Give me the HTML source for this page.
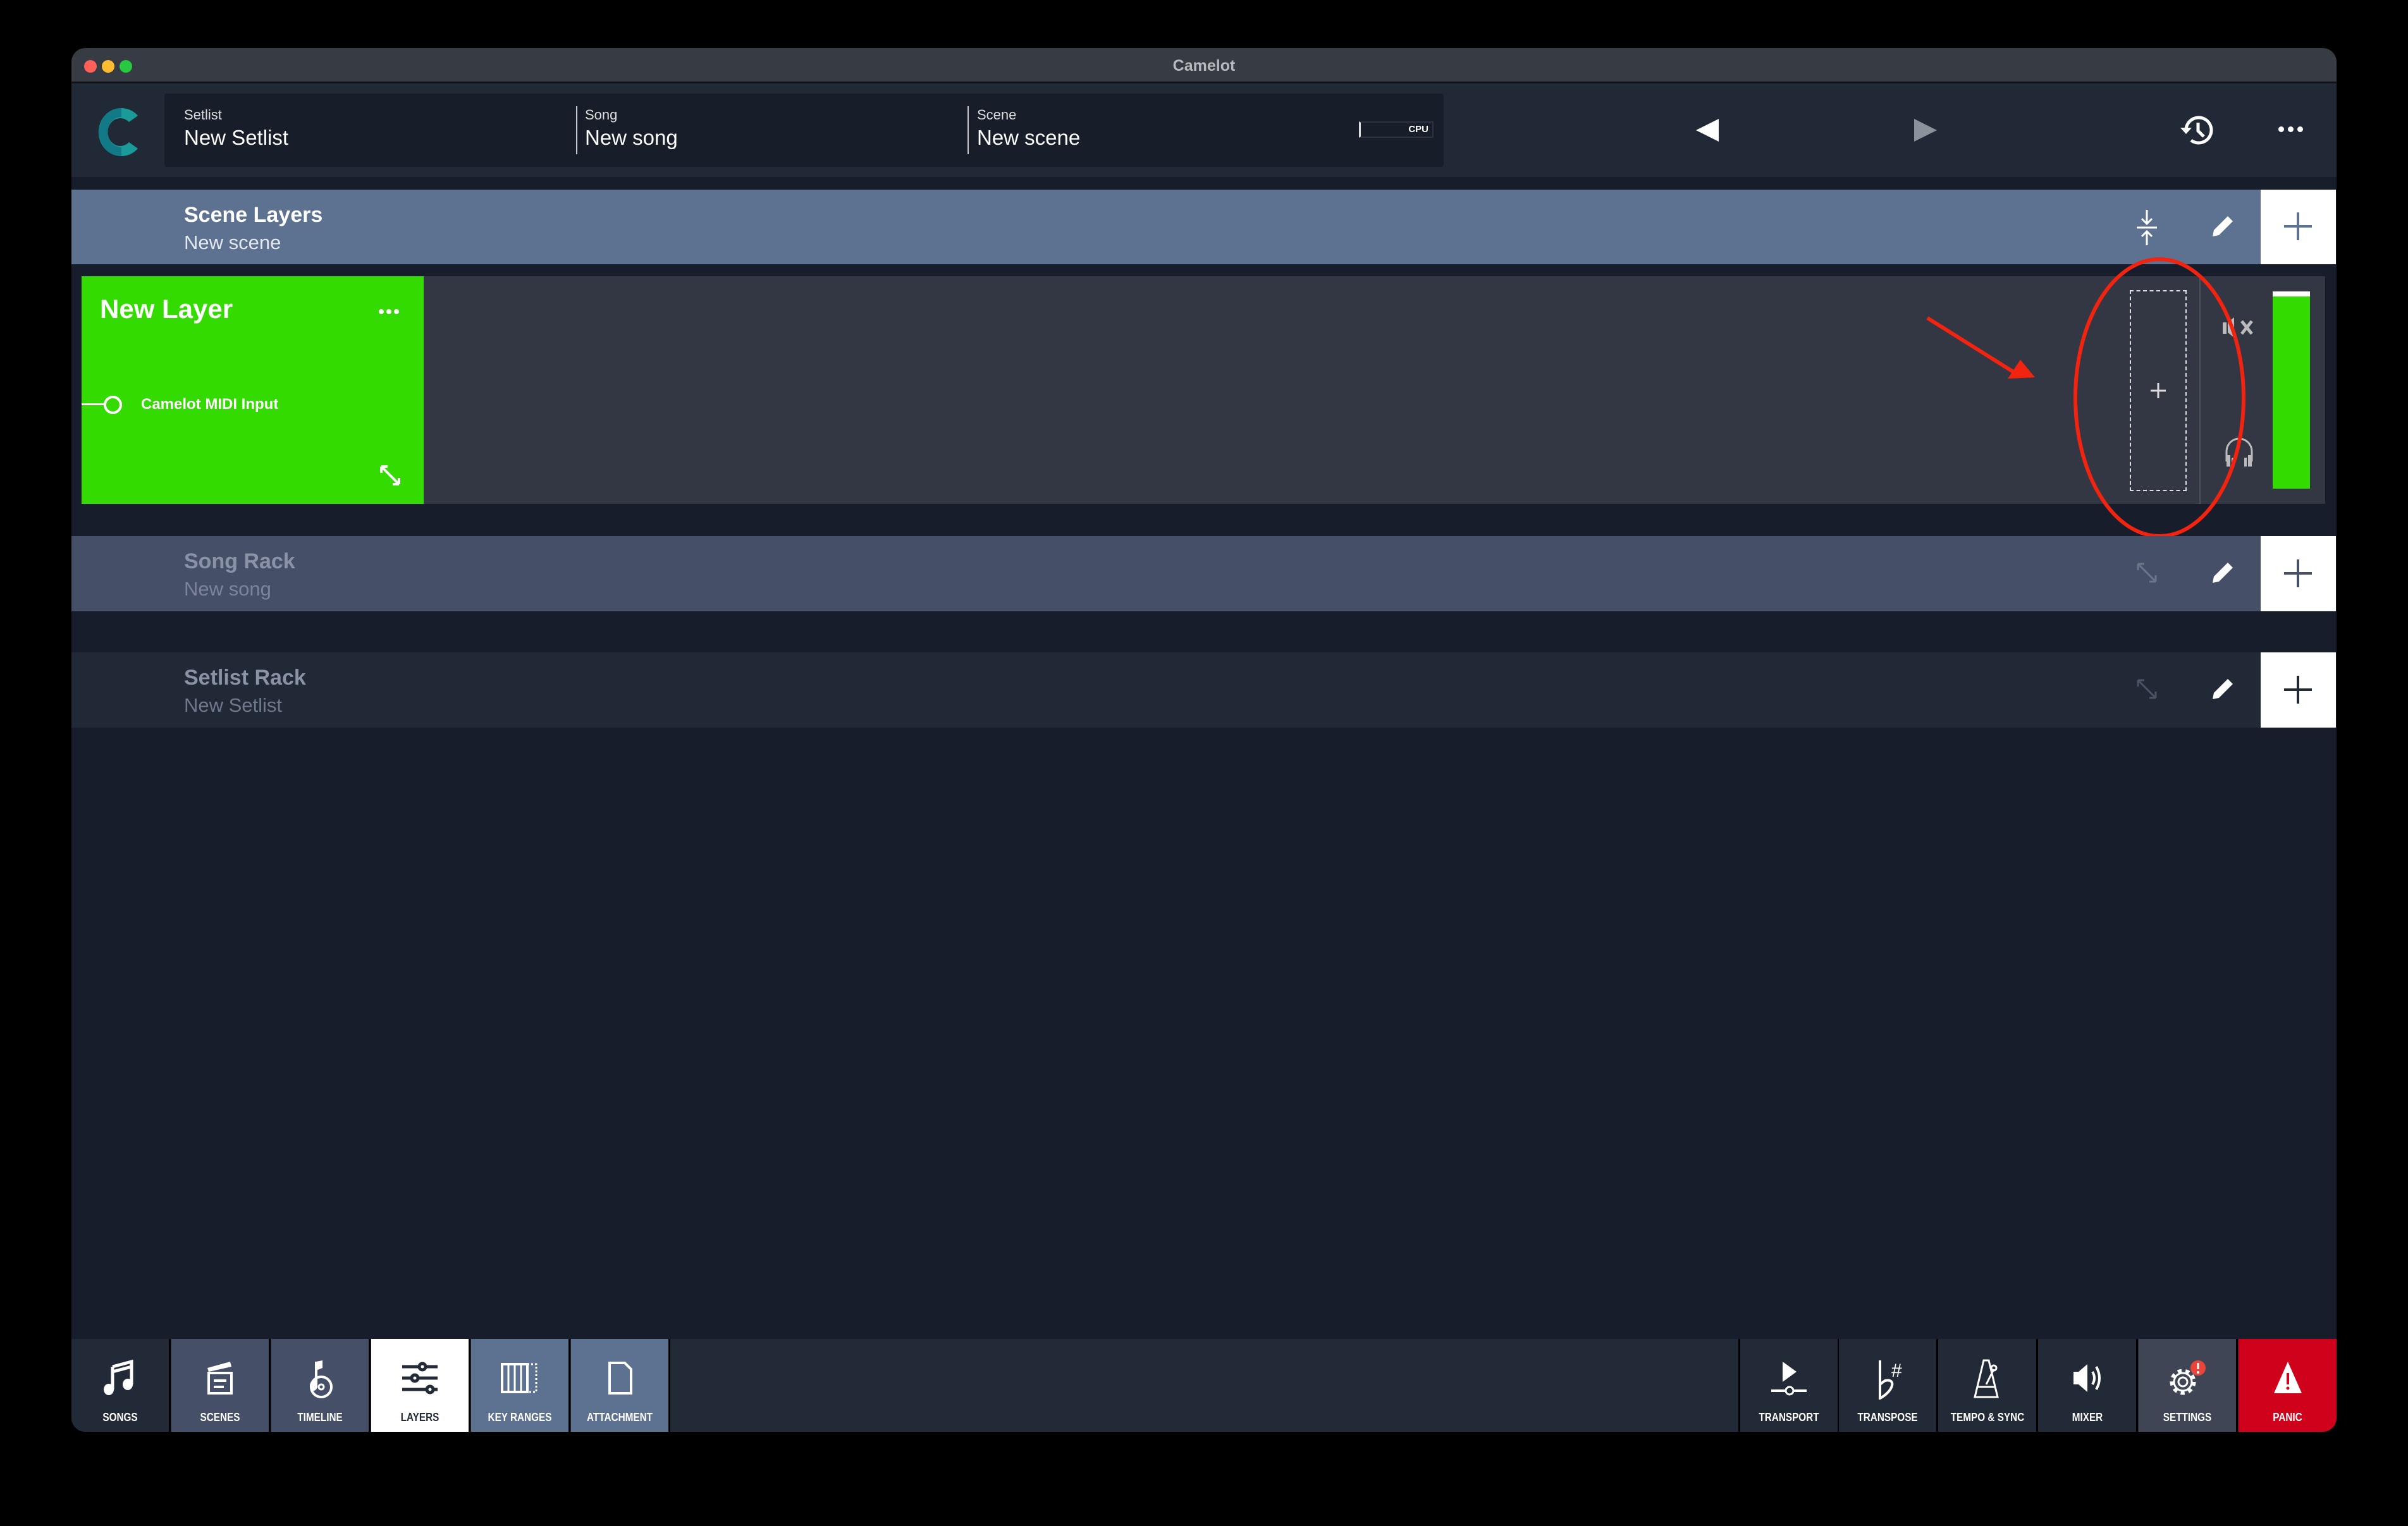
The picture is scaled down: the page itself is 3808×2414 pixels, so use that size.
<!DOCTYPE html>
<html><head><meta charset="utf-8"><style>
*{margin:0;padding:0;box-sizing:border-box}
body{width:3808px;height:2414px;background:#000;position:relative;overflow:hidden;font-family:"Liberation Sans",sans-serif;color:#fff}
.a{position:absolute}
.win{left:113px;top:76px;width:3582px;height:2189px;background:#171d2a;border-radius:22px;overflow:hidden}
.t{white-space:nowrap}
.tab{position:absolute;top:2042px;height:147px;width:157px;border-right:3px solid #000}
.tab .l{position:absolute;bottom:12px;width:100%;text-align:center;font-size:18px;font-weight:bold;transform:scaleX(.85)}
.tab svg{position:absolute;left:50%;top:32px;transform:translateX(-50%)}
.plus{position:absolute;background:#fff;width:119px;height:118px}
</style></head><body>
<div class="a win">
 <div class="a" style="left:0;top:0;width:100%;height:55px;background:#373b44;border-bottom:2px solid #111"></div>
 <div class="a" style="left:20px;top:19px;width:20px;height:20px;border-radius:50%;background:#fe5f57"></div>
 <div class="a" style="left:48px;top:19px;width:20px;height:20px;border-radius:50%;background:#febc2e"></div>
 <div class="a" style="left:76px;top:19px;width:20px;height:20px;border-radius:50%;background:#28c840"></div>
 <div class="a t" style="left:0;width:100%;top:14px;text-align:center;font-size:25px;font-weight:bold;color:#b7b9bd">Camelot</div>
 <div class="a" style="left:0;top:56px;width:100%;height:148px;background:#212836"></div>
 <svg class="a" style="left:35px;top:87px" width="76" height="92" viewBox="0 0 76 92"><path d="M70 20 A36 38 0 1 0 70 72 L56 62 A20 22 0 1 1 56 30 Z" fill="#1b9a9a"/><path d="M44 8 A36 38 0 0 0 44 84 L44 70 A20 22 0 0 1 44 22Z" fill="#117a86"/></svg>
 <div class="a" style="left:147px;top:72px;width:2023px;height:116px;background:#171d29;border-radius:4px"></div>
 <div class="a" style="left:798px;top:92px;width:2px;height:76px;background:#c8c8c8"></div>
 <div class="a" style="left:1417px;top:92px;width:2px;height:76px;background:#c8c8c8"></div>
 <div class="a t" style="left:178px;top:93px;font-size:22px;color:#ddd">Setlist</div>
 <div class="a t" style="left:178px;top:123px;font-size:33px">New Setlist</div>
 <div class="a t" style="left:812px;top:93px;font-size:22px;color:#ddd">Song</div>
 <div class="a t" style="left:812px;top:123px;font-size:33px">New song</div>
 <div class="a t" style="left:1432px;top:93px;font-size:22px;color:#ddd">Scene</div>
 <div class="a t" style="left:1432px;top:123px;font-size:33px">New scene</div>
 <div class="a" style="left:2036px;top:116px;width:118px;height:26px;border:2px solid #2c3242;border-left:3px solid #ddd;font-size:15px;font-weight:bold;text-align:right;padding-right:6px;line-height:22px">CPU</div>
 <svg class="a" style="left:2565px;top:108px" width="44" height="44"><path d="M40 4 V40 L4 22Z" fill="#fff"/></svg>
 <svg class="a" style="left:2910px;top:108px" width="44" height="44"><path d="M4 4 V40 L40 22Z" fill="#8c929c"/></svg>
 <svg class="a" style="left:3332px;top:100px" width="60" height="60" viewBox="0 0 60 60"><path d="M12 30 A20 20 0 1 1 20 46" fill="none" stroke="#fff" stroke-width="5"/><path d="M3 26 L12 36 L21 26Z" fill="#fff"/><path d="M31 18 V31 L40 40" fill="none" stroke="#fff" stroke-width="5"/></svg>
 <div class="a" style="left:3490px;top:124px;width:9px;height:9px;border-radius:50%;background:#fff;box-shadow:15px 0 #fff,30px 0 #fff"></div>
 <div class="a" style="left:0;top:224px;width:3462px;height:118px;background:#5d7190"></div>
 <div class="plus" style="left:3462px;top:224px"></div>
 <svg class="a" style="left:3491px;top:252px" width="60" height="60"><path d="M30 8V52M8 30H52" stroke="#5d7190" stroke-width="4"/></svg>
 <div class="a t" style="left:178px;top:245px;font-size:34px;font-weight:bold">Scene Layers</div>
 <div class="a t" style="left:178px;top:290px;font-size:31px;color:#e3e8ef">New scene</div>
 <svg class="a" style="left:3262px;top:254px" width="40" height="60"><path d="M20 2V24M12 16L20 24L28 16M4 30H36M20 58V36M12 44L20 36L28 44" stroke="#fff" stroke-width="3" fill="none"/></svg>
 <svg class="a" style="left:3380px;top:260px" width="44" height="44"><path d="M6 38 L8 28 L30 6 L38 14 L16 36Z" fill="#fff"/></svg>
 <div class="a" style="left:16px;top:361px;width:3548px;height:360px;background:#323743"></div>
 <div class="a" style="left:16px;top:361px;width:541px;height:360px;background:#33db00"></div>
 <div class="a t" style="left:45px;top:389px;font-size:42px;font-weight:bold">New Layer</div>
 <div class="a" style="left:486px;top:413px;width:8px;height:8px;border-radius:50%;background:#fff;box-shadow:12px 0 #fff,24px 0 #fff"></div>
 <div class="a" style="left:16px;top:562px;width:36px;height:3px;background:#fff"></div>
 <div class="a" style="left:51px;top:550px;width:29px;height:29px;border:4px solid #fff;border-radius:50%"></div>
 <div class="a t" style="left:110px;top:550px;font-size:24px;font-weight:bold">Camelot MIDI Input</div>
 <svg class="a" style="left:484px;top:656px" width="40" height="40"><path d="M6 6L34 34M6 6H16M6 6V16M34 34H24M34 34V24" stroke="#fff" stroke-width="4" fill="none"/></svg>
 <div class="a" style="left:3255px;top:383px;width:90px;height:318px;border:2px dashed #ddd"></div>
 <svg class="a" style="left:3285px;top:527px" width="30" height="30"><path d="M15 3V27M3 15H27" stroke="#ddd" stroke-width="3"/></svg>
 <div class="a" style="left:3365px;top:361px;width:2px;height:360px;background:#4a505c"></div>
 <svg class="a" style="left:3400px;top:424px" width="56" height="36"><path d="M2 10H8V28H2Z M10 10 L20 2V34L10 26Z" fill="#bbb"/><path d="M32 8L48 28M48 8L32 28" stroke="#bbb" stroke-width="5"/></svg>
 <svg class="a" style="left:3400px;top:610px" width="56" height="56"><path d="M8 44V28A20 20 0 0 1 48 28V44" fill="none" stroke="#bbb" stroke-width="3"/><rect x="8" y="34" width="6" height="18" fill="#bbb"/><rect x="42" y="34" width="6" height="18" fill="#bbb"/><rect x="16" y="38" width="4" height="14" fill="#bbb"/><rect x="36" y="38" width="4" height="14" fill="#bbb"/></svg>
 <div class="a" style="left:3481px;top:385px;width:59px;height:312px;background:#33db00;border-top:8px solid #fff"></div>
 <svg class="a" style="left:0;top:0" width="3582" height="900"><ellipse cx="3302" cy="553" rx="133" ry="219" fill="none" stroke="#f2230f" stroke-width="6"/><path d="M2935 427L3080 518" stroke="#f2230f" stroke-width="6"/><path d="M3105 521L3062 523L3082 493Z" fill="#f2230f"/></svg>
 <div class="a" style="left:0;top:772px;width:3462px;height:119px;background:#454f68"></div>
 <div class="plus" style="left:3462px;top:772px;height:119px"></div>
 <svg class="a" style="left:3491px;top:801px" width="60" height="60"><path d="M30 8V52M8 30H52" stroke="#454f68" stroke-width="4"/></svg>
 <div class="a t" style="left:178px;top:793px;font-size:34px;font-weight:bold;color:#8a93a6">Song Rack</div>
 <div class="a t" style="left:178px;top:838px;font-size:31px;color:#7b8499">New song</div>
 <svg class="a" style="left:3262px;top:810px" width="40" height="40"><path d="M6 6L34 34M6 6H16M6 6V16M34 34H24M34 34V24" stroke="#6d7588" stroke-width="3" fill="none"/></svg>
 <svg class="a" style="left:3380px;top:808px" width="44" height="44"><path d="M6 38 L8 28 L30 6 L38 14 L16 36Z" fill="#fff"/></svg>
 <div class="a" style="left:0;top:956px;width:3462px;height:119px;background:#212836"></div>
 <div class="plus" style="left:3462px;top:956px;height:119px"></div>
 <svg class="a" style="left:3491px;top:985px" width="60" height="60"><path d="M30 8V52M8 30H52" stroke="#212836" stroke-width="4"/></svg>
 <div class="a t" style="left:178px;top:977px;font-size:34px;font-weight:bold;color:#8a93a6">Setlist Rack</div>
 <div class="a t" style="left:178px;top:1022px;font-size:31px;color:#6f788b">New Setlist</div>
 <svg class="a" style="left:3262px;top:994px" width="40" height="40"><path d="M6 6L34 34M6 6H16M6 6V16M34 34H24M34 34V24" stroke="#4a5264" stroke-width="3" fill="none"/></svg>
 <svg class="a" style="left:3380px;top:992px" width="44" height="44"><path d="M6 38 L8 28 L30 6 L38 14 L16 36Z" fill="#fff"/></svg>
 <div class="a" style="left:0;top:2042px;width:100%;height:147px;background:#222937"></div>
 <div class="tab" style="left:0;background:#222937"><svg width="60" height="60" viewBox="0 0 60 60"><path d="M18 12L48 4V40" stroke="#fff" stroke-width="5" fill="none"/><path d="M18 12V48M18 20L48 12" stroke="#fff" stroke-width="5"/><ellipse cx="12" cy="48" rx="8" ry="9" fill="#fff"/><ellipse cx="42" cy="40" rx="8" ry="9" fill="#fff"/></svg><div class="l">SONGS</div></div>
 <div class="tab" style="left:158px;background:#454f68"><svg width="60" height="60"><rect x="12" y="22" width="36" height="32" fill="none" stroke="#fff" stroke-width="4"/><path d="M20 34H40M20 44H36" stroke="#fff" stroke-width="4"/><path d="M10 14L46 4L48 12L12 20Z" fill="#fff"/></svg><div class="l">SCENES</div></div>
 <div class="tab" style="left:316px;background:#454f68"><svg width="60" height="64"><circle cx="32" cy="44" r="16" fill="none" stroke="#fff" stroke-width="4"/><circle cx="32" cy="44" r="4" fill="none" stroke="#fff" stroke-width="3"/><path d="M24 4V40" stroke="#fff" stroke-width="4"/><path d="M24 4L34 2V14L24 18Z" fill="#fff"/><ellipse cx="20" cy="42" rx="6" ry="8" fill="#fff"/></svg><div class="l">TIMELINE</div></div>
 <div class="tab" style="left:474px;background:#fff;color:#222937"><svg width="64" height="60"><g stroke="#222937" stroke-width="5" fill="#fff"><path d="M4 12H60M4 30H60M4 48H60"/><circle cx="36" cy="12" r="5"/><circle cx="24" cy="30" r="5"/><circle cx="48" cy="48" r="5"/></g></svg><div class="l">LAYERS</div></div>
 <div class="tab" style="left:632px;background:#5d7190"><svg width="64" height="60"><rect x="4" y="8" width="40" height="44" fill="none" stroke="#fff" stroke-width="4"/><path d="M14 8V52M24 8V52M34 8V52" stroke="#fff" stroke-width="3"/><path d="M44 8H58V52H44" stroke="#fff" stroke-width="3" stroke-dasharray="3 3" fill="none"/></svg><div class="l">KEY RANGES</div></div>
 <div class="tab" style="left:790px;background:#5d7190"><svg width="60" height="60"><path d="M14 6H38L48 16V54H14Z" fill="none" stroke="#fff" stroke-width="4"/></svg><div class="l">ATTACHMENT</div></div>
 <div class="tab" style="left:2636px;background:#222937;border-left:3px solid #000;width:160px"><svg width="64" height="60"><path d="M22 4L44 20L22 36Z" fill="#fff"/><path d="M4 50H26M40 50H60" stroke="#fff" stroke-width="4"/><circle cx="33" cy="50" r="6" fill="none" stroke="#fff" stroke-width="3"/></svg><div class="l">TRANSPORT</div></div>
 <div class="tab" style="left:2795px;background:#222937"><svg width="60" height="64"><path d="M18 2V62 C40 50 44 30 26 34 L18 40" fill="none" stroke="#fff" stroke-width="4"/><text x="36" y="28" font-size="30" fill="#fff" font-family="Liberation Sans">#</text></svg><div class="l">TRANSPOSE</div></div>
 <div class="tab" style="left:2953px;background:#222937"><svg width="60" height="64"><path d="M24 2H32L46 60H10Z M14 44H42" fill="none" stroke="#fff" stroke-width="3"/><path d="M28 40L40 16" stroke="#fff" stroke-width="3"/><circle cx="40" cy="14" r="4" fill="none" stroke="#fff" stroke-width="3"/></svg><div class="l">TEMPO &amp; SYNC</div></div>
 <div class="tab" style="left:3111px;background:#222937"><svg width="60" height="60"><path d="M8 20H16L30 8V52L16 40H8Z" fill="#fff"/><path d="M38 20Q44 30 38 40M44 12Q54 30 44 48" fill="none" stroke="#fff" stroke-width="4"/></svg><div class="l">MIXER</div></div>
 <div class="tab" style="left:3269px;background:#3f4555"><svg width="70" height="64" viewBox="0 0 70 64"><circle cx="28" cy="36" r="17" fill="none" stroke="#fff" stroke-width="7" stroke-dasharray="6 6"/><circle cx="28" cy="36" r="14" fill="#3f4555" stroke="#fff" stroke-width="3"/><circle cx="28" cy="36" r="7" fill="none" stroke="#fff" stroke-width="3"/><circle cx="52" cy="14" r="12" fill="#e8463b"/><path d="M52 6V16" stroke="#fff" stroke-width="3"/><circle cx="52" cy="21" r="2" fill="#fff"/></svg><div class="l">SETTINGS</div></div>
 <div class="tab" style="left:3427px;background:#d0021b;border-right:none;width:155px"><svg width="60" height="60"><path d="M30 4L52 54H8Z" fill="#fff"/><path d="M30 22V40" stroke="#d0021b" stroke-width="4"/><circle cx="30" cy="46" r="2.5" fill="#d0021b"/></svg><div class="l">PANIC</div></div>
</div>
</body></html>
